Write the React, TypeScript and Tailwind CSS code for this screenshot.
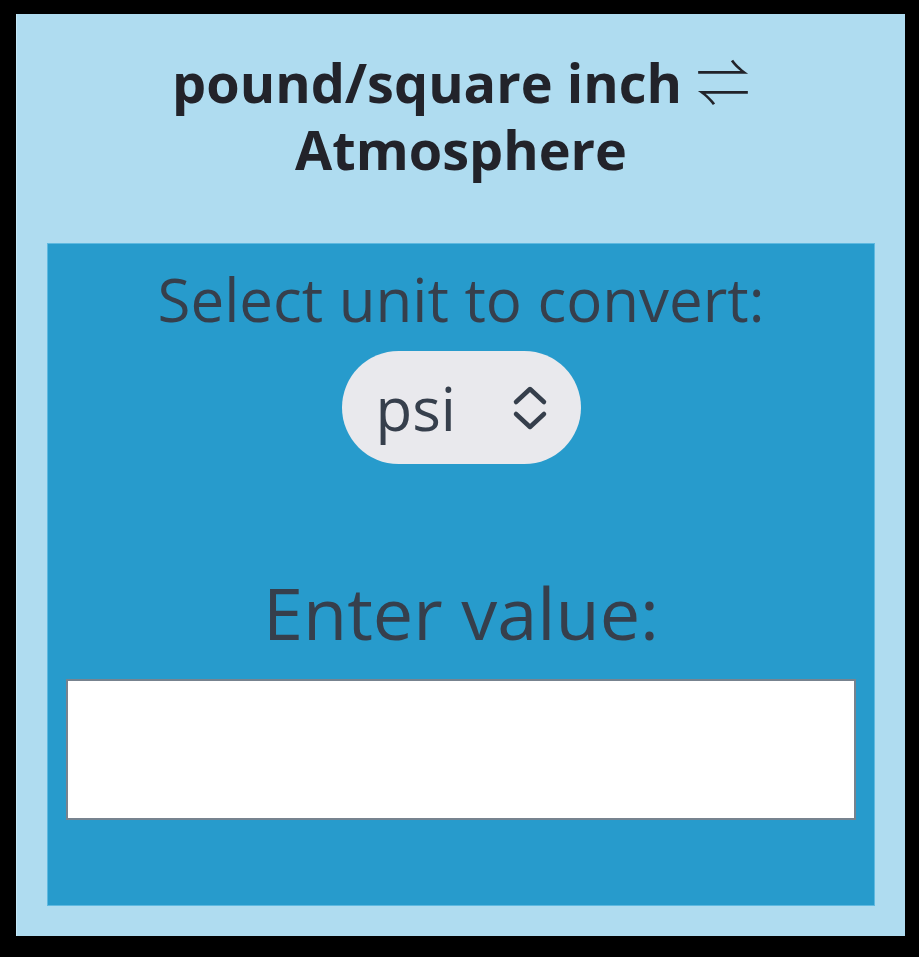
import React, { useState } from 'react'

const units = ['psi', 'atm']

const App = () => {
    const [unit, setUnit] = useState('psi')
    const [value, setValue] = useState('')

    return (
        <div className="min-h-screen bg-black pt-[14px] pl-[16px] pr-[14px] pb-[21px] font-['Open_Sans',sans-serif]">
            <div className="h-[922px] bg-[#afdcf0] border-l border-[#c4e8f8] px-[30px] pb-[30px] flex flex-col">
                <h1 className="h-[229px] pt-[32px] px-[10px] text-center text-[54px] leading-[67px] font-bold text-[#22232a]">
                    pound/square inch{' '}
                    <span className="font-light font-['Noto_Sans_CJK_JP','DejaVu_Sans',sans-serif] text-[54px] leading-[67px]">⇌</span>{' '}
                    Atmosphere
                </h1>
                <div className="flex-1 bg-[#279bcc] border border-[#5fb9e0] flex flex-col items-center px-[18px] text-[#363f4c]">
                    <label htmlFor="unit" className="mt-[19px] text-[60px] leading-[72px]">
                        Select unit to convert:
                    </label>
                    <div className="relative mt-[16px]">
                        <select
                            id="unit"
                            value={unit}
                            onChange={(e) => setUnit(e.target.value)}
                            className="appearance-none w-[239px] h-[113px] rounded-full bg-[#e9e9ed] pl-[34px] text-[60px] text-[#363f4c] outline-none"
                        >
                            {units.map((u) => (
                                <option key={u} value={u}>{u}</option>
                            ))}
                        </select>
                        <svg
                            className="pointer-events-none absolute right-[31px] top-1/2 -translate-y-1/2"
                            width="40"
                            height="46"
                            viewBox="0 0 40 46"
                            fill="none"
                            stroke="#363f4c"
                            strokeWidth="4.5"
                            strokeLinecap="round"
                            strokeLinejoin="round"
                        >
                            <path d="M6 17 L20 4 L34 17" />
                            <path d="M6 29 L20 42 L34 29" />
                        </svg>
                    </div>
                    <label htmlFor="value" className="mt-[106px] text-[72px] leading-[84px]">
                        Enter value:
                    </label>
                    <input
                        id="value"
                        type="number"
                        value={value}
                        onChange={(e) => setValue(e.target.value)}
                        className="mt-[25px] w-full h-[141px] bg-white border-2 border-[#77838f] outline-none px-3 text-[40px]"
                    />
                </div>
            </div>
        </div>
    )
}

export default App
